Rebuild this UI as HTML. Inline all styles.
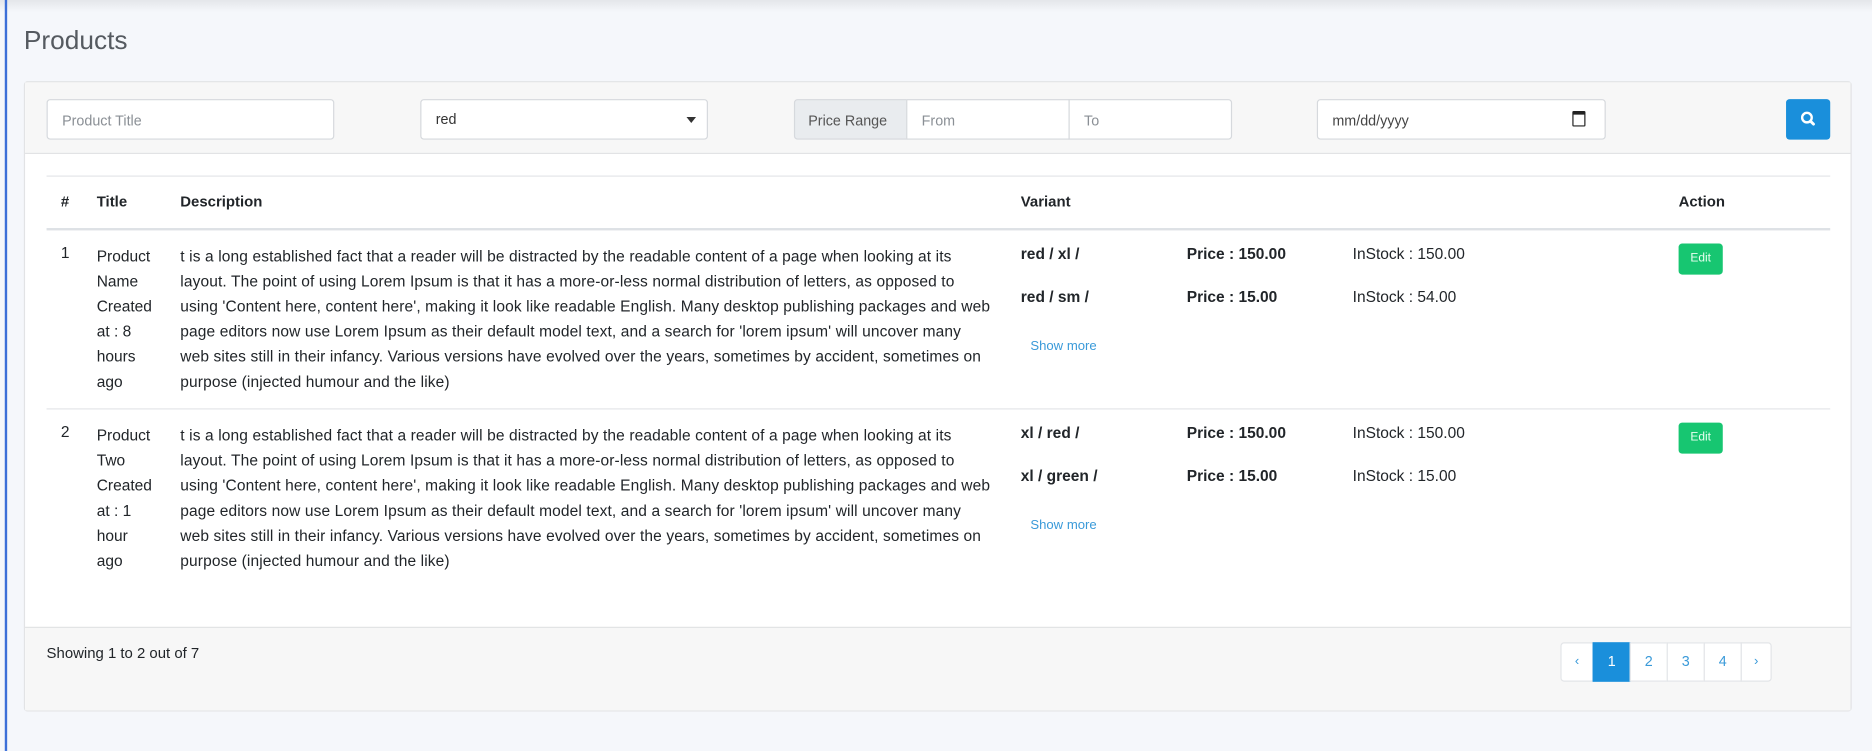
<!DOCTYPE html>
<html><head><meta charset="utf-8">
<style>
*{box-sizing:border-box;margin:0;padding:0}
html,body{width:1872px;height:751px;overflow:hidden;background:#f5f7fb}
#root{position:absolute;left:0;top:0;width:1568px;height:629px;transform:scale(1.19388);transform-origin:0 0;font-family:"Liberation Sans",sans-serif;color:#212529}
.abs{position:absolute}
.topbar{left:0;top:0;width:1568px;height:10px;background:linear-gradient(#e4e6ea,#f5f7fb)}
.lb{left:4px;top:0;width:2px;height:629px;background:#3c6fd8}
h1{position:absolute;left:20px;top:21px;font-size:22px;font-weight:normal;color:#555a60}
.card{left:20px;top:68px;width:1531px;height:528px;border:1px solid #e2e3e5;background:#fff;border-radius:3px}
.chead{left:0;top:0;width:1529px;height:60px;background:#f7f7f7;border-bottom:1px solid #e2e3e5}
.cfoot{left:0;top:456px;width:1529px;height:70px;background:#f7f7f7;border-top:1px solid #e2e3e5}
.inp{position:absolute;height:34px;border:1px solid #d6d9dd;background:#fff;border-radius:3px;font-size:12px;color:#8a8f95;padding:10px 12px 0;white-space:nowrap}
.tx{position:absolute;font-size:13px;white-space:nowrap}
.hd{font-size:12.5px}
.b{font-weight:bold}
.sm{font-size:11px;color:#3a9ad9}
.edit{position:absolute;width:37px;height:26px;background:#17c671;color:#e8fff0;font-size:10px;border-radius:3px;text-align:center;line-height:26px}
.desc{position:absolute;left:130px;font-size:13px;line-height:21px;white-space:nowrap;letter-spacing:0.1px}
.pg{position:absolute;top:12px;height:33px;border:1px solid #e3e5e8;background:#fff;color:#3a9ad9;font-size:12px;text-align:center;line-height:31px}
</style></head><body><div id="root">
<div class="abs topbar"></div>
<div class="abs lb"></div>
<h1>Products</h1>
<div class="abs card">
 <div class="abs chead">
  <div class="inp" style="left:18px;top:14px;width:241px">Product Title</div>
  <div class="inp" style="left:331px;top:14px;width:241px;color:#333;padding-top:9px">red<span style="position:absolute;right:9px;top:14px;width:0;height:0;border-left:4px solid transparent;border-right:4px solid transparent;border-top:5px solid #333"></span></div>
  <div class="inp" style="left:644px;top:14px;width:95px;background:#e9ecef;color:#555;border-radius:3px 0 0 3px;padding-left:11px">Price Range</div>
  <div class="inp" style="left:738px;top:14px;width:137px;border-radius:0">From</div>
  <div class="inp" style="left:874px;top:14px;width:137px;border-radius:0 3px 3px 0">To</div>
  <div class="inp" style="left:1082px;top:14px;width:242px;color:#444">mm/dd/yyyy<span style="position:absolute;right:16px;top:9px;width:11px;height:13px;border:1.5px solid #222;border-top-width:3px;border-radius:1px"></span></div>
  <div class="abs" style="left:1475px;top:14px;width:37px;height:34px;background:#1a8fdb;border-radius:3px">
   <svg width="37" height="34" viewBox="0 0 37 34"><circle cx="17.5" cy="15.5" r="4" fill="none" stroke="#fff" stroke-width="2"/><line x1="20.5" y1="18.5" x2="23" y2="21" stroke="#fff" stroke-width="2.4" stroke-linecap="round"/></svg>
  </div>
 </div>
 <div class="abs" style="left:18px;top:78px;width:1494px;height:1px;background:#e3e5e8"></div>
 <div class="tx b hd" style="left:30px;top:93px">#</div>
 <div class="tx b hd" style="left:60px;top:93px">Title</div>
 <div class="tx b hd" style="left:130px;top:93px">Description</div>
 <div class="tx b hd" style="left:834px;top:93px">Variant</div>
 <div class="tx b hd" style="left:1385px;top:93px">Action</div>
 <div class="abs" style="left:18px;top:122px;width:1494px;height:2px;background:#dee1e5"></div>

 <div class="tx" style="left:30px;top:135px">1</div>
 <div class="tx" style="left:60px;top:135px;line-height:21px">Product<br>Name<br>Created<br>at : 8<br>hours<br>ago</div>
 <div class="desc" style="top:135px">t is a long established fact that a reader will be distracted by the readable content of a page when looking at its<br>layout. The point of using Lorem Ipsum is that it has a more-or-less normal distribution of letters, as opposed to<br>using 'Content here, content here', making it look like readable English. Many desktop publishing packages and web<br>page editors now use Lorem Ipsum as their default model text, and a search for 'lorem ipsum' will uncover many<br>web sites still in their infancy. Various versions have evolved over the years, sometimes by accident, sometimes on<br>purpose (injected humour and the like)</div>
 <div class="tx b" style="left:834px;top:136px">red / xl /</div>
 <div class="tx b" style="left:973px;top:136px">Price : 150.00</div>
 <div class="tx" style="left:1112px;top:136px">InStock : 150.00</div>
 <div class="tx b" style="left:834px;top:172px">red / sm /</div>
 <div class="tx b" style="left:973px;top:172px">Price : 15.00</div>
 <div class="tx" style="left:1112px;top:172px">InStock : 54.00</div>
 <div class="tx sm" style="left:842px;top:215px">Show more</div>
 <div class="edit" style="left:1385px;top:135px">Edit</div>

 <div class="abs" style="left:18px;top:273px;width:1494px;height:1px;background:#e3e5e8"></div>

 <div class="tx" style="left:30px;top:285px">2</div>
 <div class="tx" style="left:60px;top:285px;line-height:21px">Product<br>Two<br>Created<br>at : 1<br>hour<br>ago</div>
 <div class="desc" style="top:285px">t is a long established fact that a reader will be distracted by the readable content of a page when looking at its<br>layout. The point of using Lorem Ipsum is that it has a more-or-less normal distribution of letters, as opposed to<br>using 'Content here, content here', making it look like readable English. Many desktop publishing packages and web<br>page editors now use Lorem Ipsum as their default model text, and a search for 'lorem ipsum' will uncover many<br>web sites still in their infancy. Various versions have evolved over the years, sometimes by accident, sometimes on<br>purpose (injected humour and the like)</div>
 <div class="tx b" style="left:834px;top:286px">xl / red /</div>
 <div class="tx b" style="left:973px;top:286px">Price : 150.00</div>
 <div class="tx" style="left:1112px;top:286px">InStock : 150.00</div>
 <div class="tx b" style="left:834px;top:322px">xl / green /</div>
 <div class="tx b" style="left:973px;top:322px">Price : 15.00</div>
 <div class="tx" style="left:1112px;top:322px">InStock : 15.00</div>
 <div class="tx sm" style="left:842px;top:365px">Show more</div>
 <div class="edit" style="left:1385px;top:285px">Edit</div>

 <div class="abs cfoot">
  <div class="tx" style="left:18px;top:14px;font-size:12.5px">Showing 1 to 2 out of 7</div>
  <div class="pg" style="left:1286px;width:28px;border-radius:3px 0 0 3px;font-size:11px">‹</div>
  <div class="pg" style="left:1313px;width:32px;background:#1a8fdb;border-color:#1a8fdb;color:#fff">1</div>
  <div class="pg" style="left:1344px;width:32px">2</div>
  <div class="pg" style="left:1375px;width:32px">3</div>
  <div class="pg" style="left:1406px;width:32px">4</div>
  <div class="pg" style="left:1437px;width:26px;border-radius:0 3px 3px 0;font-size:11px">›</div>
 </div>
</div>
</div></body></html>
